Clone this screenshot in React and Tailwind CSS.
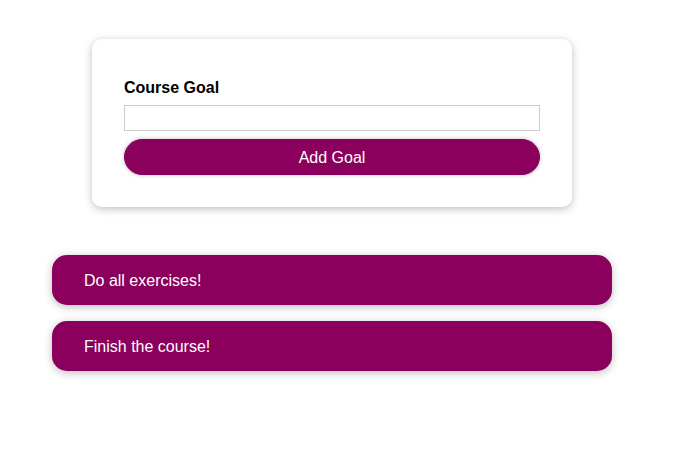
import { useState } from "react";

const startGoals = [
  { id: "g1", text: "Do all exercises!" },
  { id: "g2", text: "Finish the course!" },
];

function GoalInput(props) {
  const [value, setValue] = useState("");

  const submitHandler = (e) => {
    e.preventDefault();
    if (value.trim().length === 0) return;
    props.onAddGoal(value);
    setValue("");
  };

  return (
    <form
      onSubmit={submitHandler}
      className="mt-[39px] ml-[92px] w-[480px] p-8 rounded-[10px] bg-white shadow-[0_2px_8px_rgba(0,0,0,0.26)]"
    >
      <div className="my-2">
        <label className="block font-bold text-base leading-[18px] mb-2 text-black">Course Goal</label>
        <input
          type="text"
          value={value}
          onChange={(e) => setValue(e.target.value)}
          className="block w-full border border-[#ccc] leading-6 h-[26px] px-1 text-base outline-none"
        />
      </div>
      <button
        type="submit"
        className="w-full h-9 pt-[2px] rounded-full bg-[#8b005d] border border-[#8b005d] text-white text-base leading-[18px] shadow-[0_0_4px_rgba(0,0,0,0.26)] cursor-pointer"
      >
        Add Goal
      </button>
    </form>
  );
}

function GoalList(props) {
  return (
    <ul className="mt-12 ml-[52px] w-[560px] flex flex-col gap-4">
      {props.items.map((goal) => (
        <li
          key={goal.id}
          onClick={() => props.onDelete(goal.id)}
          className="bg-[#8b005d] text-white text-base leading-[18px] pt-[17px] pb-[15px] px-8 rounded-[15px] shadow-[0_2px_8px_rgba(0,0,0,0.26)] cursor-pointer"
        >
          {goal.text}
        </li>
      ))}
    </ul>
  );
}

export default function App() {
  const [goals, setGoals] = useState(startGoals);

  const addGoal = (text) => {
    setGoals((prev) => [{ id: Math.random().toString(), text }, ...prev]);
  };

  const deleteGoal = (id) => {
    setGoals((prev) => prev.filter((g) => g.id !== id));
  };

  return (
    <div className="w-[700px] h-[455px] bg-white overflow-hidden font-['Liberation_Sans',Arial,sans-serif]">
      <GoalInput onAddGoal={addGoal} />
      <GoalList items={goals} onDelete={deleteGoal} />
    </div>
  );
}
